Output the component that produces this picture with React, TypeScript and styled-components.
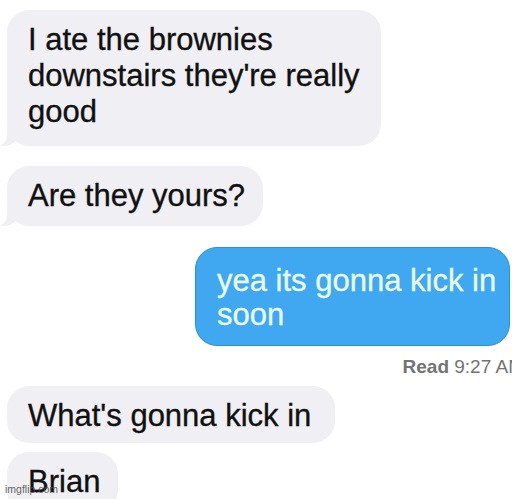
import styled, { createGlobalStyle } from 'styled-components';

const GlobalStyle = createGlobalStyle`
  html, body {
    margin: 0;
    padding: 0;
    background: #ffffff;
    overflow: hidden;
  }
  body {
    font-family: 'Liberation Sans', Arial, sans-serif;
  }
`;

type Message = {
  text: string;
  tail?: boolean;
};

const received: Message[] = [
  { text: "I ate the brownies downstairs they're really good", tail: true },
  { text: 'Are they yours?', tail: true },
];

export default function App() {
  return (
    <>
      <GlobalStyle />
      <Screen>
        <Bubble $tail={received[0].tail} $gap={0} $padBottom={16}>
          {received[0].text}
        </Bubble>
        <Bubble $tail={received[1].tail} $gap={20}>
          {received[1].text}
        </Bubble>
        <SentBubble>yea its gonna kick in soon</SentBubble>
        <Receipt>
          <strong>Read</strong> 9:27 AM
        </Receipt>
        <Bubble $gap={8} $padBottom={9} $padRight={24}>
          What's gonna kick in
        </Bubble>
        <Bubble $gap={9}>Brian</Bubble>
        <Watermark>imgflip.com</Watermark>
      </Screen>
    </>
  );
}

const Screen = styled.div`
  position: relative;
  display: flex;
  flex-direction: column;
  align-items: flex-start;
  width: 532px;
  height: 499px;
  padding-top: 10px;
  box-sizing: border-box;
`;

const Bubble = styled.div<{
  $tail?: boolean;
  $gap: number;
  $padBottom?: number;
  $padRight?: number;
}>`
  position: relative;
  margin: ${p => p.$gap}px 0 0 7px;
  max-width: 374px;
  box-sizing: border-box;
  padding: 12px ${p => p.$padRight ?? 18}px ${p => p.$padBottom ?? 12}px 21px;
  border-radius: 22px;
  background: #f0f0f4;
  color: #111111;
  font-size: 31px;
  line-height: 36px;
  -webkit-text-stroke: 0.35px #111111;

  ${p =>
    p.$tail &&
    `
    &::before {
      content: '';
      position: absolute;
      bottom: 0;
      left: -7px;
      width: 20px;
      height: 20px;
      background: #f0f0f4;
      border-bottom-right-radius: 16px;
    }
    &::after {
      content: '';
      position: absolute;
      bottom: 0;
      left: -10px;
      width: 10px;
      height: 20px;
      background: #ffffff;
      border-bottom-right-radius: 10px;
    }
  `}
`;

const SentBubble = styled.div`
  align-self: flex-end;
  margin: 21px 22px 0 0;
  max-width: 315px;
  box-sizing: border-box;
  padding: 16px 12px 13px 21px;
  border-radius: 22px;
  border: 1px solid #2f8dd2;
  background: #3fa8f1;
  color: #eafcf1;
  font-size: 31px;
  line-height: 34px;
  -webkit-text-stroke: 0.3px #eafcf1;
`;

const Receipt = styled.div`
  align-self: flex-end;
  margin: 10px 8px 0 0;
  color: #737373;
  font-size: 19px;
  white-space: nowrap;

  strong {
    font-weight: 700;
  }
`;

const Watermark = styled.div`
  position: absolute;
  left: 5px;
  bottom: 4px;
  font-size: 10.5px;
  color: #4a4a4a;
  opacity: 0.85;
`;
